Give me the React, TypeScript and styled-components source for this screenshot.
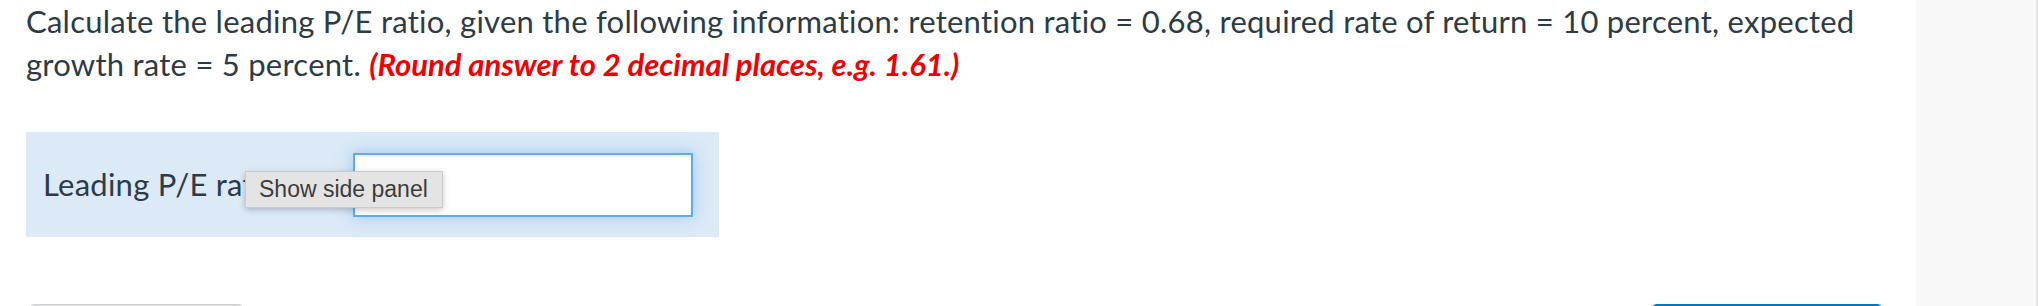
import React from 'react';
import styled, { createGlobalStyle } from 'styled-components';

const GlobalStyle = createGlobalStyle`
  html, body {
    margin: 0;
    padding: 0;
    background: #fff;
  }
  body {
    font-family: 'Lato', 'Open Sans', sans-serif;
    overflow: hidden;
  }
`;

const Page = styled.div`
  display: flex;
  width: 2038px;
  height: 306px;
  overflow: hidden;
`;

const Main = styled.div`
  flex: 1;
  padding: 0 33px 0 26px;
  display: flex;
  flex-direction: column;

  & > * {
    flex-shrink: 0;
  }
`;

const SidePanel = styled.div`
  width: 120px;
  background: #f8f8f8;
  border-right: 2px solid #e6e6e6;
`;

const Question = styled.p`
  margin: 0;
  font-size: 31px;
  letter-spacing: 0.25px;
  line-height: 43px;
  color: #2d3b45;
  white-space: nowrap;
`;

const Hint = styled.em`
  color: #f20000;
  font-weight: 700;
  letter-spacing: 0;
`;

const AnswerBox = styled.div`
  position: relative;
  margin-top: 46px;
  width: 693px;
  height: 105px;
  box-sizing: border-box;
  padding: 0 0 0 17px;
  background: #dce9f7;
  display: flex;
  align-items: center;
`;

const Label = styled.label`
  flex: 0 0 310px;
  font-size: 31px;
  letter-spacing: 0.25px;
  line-height: 43px;
  color: #2d3b45;
  white-space: nowrap;
  overflow: hidden;
`;

const Input = styled.input`
  width: 340px;
  height: 64px;
  box-sizing: border-box;
  border: 2px solid #5eaee6;
  background: #fff;
  outline: none;
  box-shadow: 0 0 14px rgba(94, 174, 230, 0.55), inset 0 2px 2px rgba(0, 0, 0, 0.07);
  font-family: inherit;
  font-size: 28px;
`;

// hover tooltip from the browser, sits over the label and the input
const Tooltip = styled.div`
  position: absolute;
  left: 219px;
  top: 39px;
  height: 37px;
  box-sizing: border-box;
  padding: 0 14px 0 13px;
  background: #e4e4e4;
  border: 1px solid #cbcbcb;
  box-shadow: 0 2px 6px rgba(0, 0, 0, 0.22);
  font-family: 'Liberation Sans', Arial, sans-serif;
  font-size: 23px;
  line-height: 35px;
  color: #3c3c3c;
  white-space: nowrap;
`;

const Actions = styled.div`
  margin-top: 67px;
  display: flex;
  justify-content: space-between;
  padding-left: 3px;
`;

const Button = styled.button<{ primary?: boolean }>`
  width: ${(props) => (props.primary ? 232 : 215)}px;
  height: 76px;
  border-radius: 6px;
  border: 1px solid ${(props) => (props.primary ? '#0a72b3' : '#c7cdd1')};
  background: ${(props) => (props.primary ? '#0b7bc0' : '#e3e3e3')};
`;

const App: React.FC = () => {
  return (
    <>
      <GlobalStyle />
      <Page>
        <Main>
          <Question>
            Calculate the leading P/E ratio, given the following information: retention ratio = 0.68, required rate of
            return = 10 percent, expected
            <br />
            growth rate = 5 percent. <Hint>(Round answer to 2 decimal places, e.g. 1.61.)</Hint>
          </Question>
          <AnswerBox>
            <Label>Leading P/E ratio</Label>
            <Input type="text" />
            <Tooltip>Show side panel</Tooltip>
          </AnswerBox>
          <Actions>
            <Button />
            <Button primary />
          </Actions>
        </Main>
        <SidePanel />
      </Page>
    </>
  );
};

export default App;
